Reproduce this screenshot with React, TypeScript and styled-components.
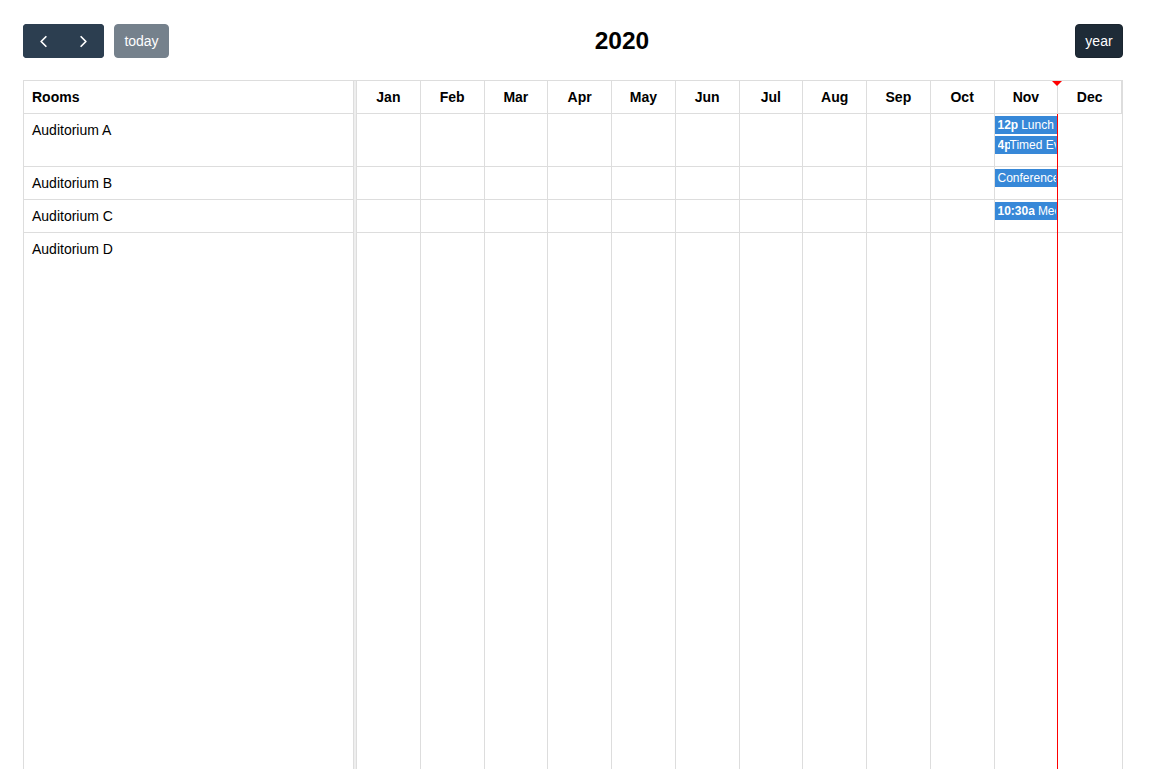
import React from "react";
import styled, { createGlobalStyle } from "styled-components";
import { ChevronLeft, ChevronRight } from "lucide-react";

const MONTHS = ["Jan", "Feb", "Mar", "Apr", "May", "Jun", "Jul", "Aug", "Sep", "Oct", "Nov", "Dec"];

interface CalEvent {
  time?: string;
  title: string;
  clipTime?: boolean;
}

interface Room {
  name: string;
  height: number;
  events: CalEvent[];
}

const ROOMS: Room[] = [
  {
    name: "Auditorium A",
    height: 53,
    events: [
      { time: "12p", title: "Lunch" },
      { time: "4p", title: "Timed Event", clipTime: true },
    ],
  },
  { name: "Auditorium B", height: 33, events: [{ title: "Conference" }] },
  { name: "Auditorium C", height: 33, events: [{ time: "10:30a", title: "Meeting" }] },
  { name: "Auditorium D", height: 620, events: [] },
];

const EVENT_MONTH = 10;
const NOW_PERCENT = 91.5;

const GlobalStyle = createGlobalStyle`
  html, body {
    margin: 0;
    padding: 0;
    overflow: hidden;
    background: #fff;
  }
  body {
    font-family: "Liberation Sans", Arial, sans-serif;
    font-size: 14px;
    color: #000;
  }
`;

function App() {
  return (
    <>
      <GlobalStyle />
      <Page>
        <Toolbar>
          <ToolbarChunk>
            <ButtonGroup>
              <NavButton aria-label="prev">
                <ChevronLeft size={19} strokeWidth={2.2} />
              </NavButton>
              <NavButton aria-label="next">
                <ChevronRight size={19} strokeWidth={2.2} />
              </NavButton>
            </ButtonGroup>
            <TodayButton disabled>today</TodayButton>
          </ToolbarChunk>
          <Title>2020</Title>
          <ToolbarChunk>
            <ViewButton>year</ViewButton>
          </ToolbarChunk>
        </Toolbar>

        <Timeline>
          <ResourcePane>
            <HeaderCell>Rooms</HeaderCell>
            {ROOMS.map((room) => (
              <ResourceCell key={room.name} $height={room.height}>
                {room.name}
              </ResourceCell>
            ))}
          </ResourcePane>

          <Divider />

          <LanePane>
            <MonthHeader>
              {MONTHS.map((m) => (
                <MonthCell key={m}>{m}</MonthCell>
              ))}
              <NowArrow style={{ left: `${NOW_PERCENT}%` }} />
            </MonthHeader>
            <LaneBody>
              {ROOMS.map((room) => (
                <Lane key={room.name} $height={room.height}>
                  {MONTHS.map((m, i) => (
                    <LaneSlot key={m}>
                      {i === EVENT_MONTH &&
                        room.events.map((ev) => (
                          <EventBar key={ev.title}>
                            {ev.time && <EventTime $clip={ev.clipTime}>{ev.time}</EventTime>}
                            <EventTitle>{ev.title}</EventTitle>
                          </EventBar>
                        ))}
                    </LaneSlot>
                  ))}
                </Lane>
              ))}
              <NowLine style={{ left: `${NOW_PERCENT}%` }} />
            </LaneBody>
          </LanePane>
        </Timeline>
      </Page>
    </>
  );
}

const Page = styled.div`
  width: 1100px;
  padding: 24px 0 0 23px;
`;

const Toolbar = styled.div`
  display: flex;
  justify-content: space-between;
  align-items: center;
  height: 34px;
  margin-bottom: 22px;
`;

const ToolbarChunk = styled.div`
  display: flex;
  align-items: center;
  gap: 10px;
`;

const ButtonGroup = styled.div`
  display: flex;
  border-radius: 4px;
  overflow: hidden;
`;

const BaseButton = styled.button`
  font-family: "Liberation Sans", Arial, sans-serif;
  font-size: 14px;
  color: #fff;
  border: 1px solid #2c3e50;
  background: #2c3e50;
  height: 34px;
  padding: 0 9px;
  border-radius: 4px;
  display: flex;
  align-items: center;
  justify-content: center;
  cursor: pointer;
`;

const NavButton = styled(BaseButton)`
  width: 40.5px;
  border-radius: 0;
  padding: 0;
`;

const TodayButton = styled(BaseButton)`
  width: 55px;
  opacity: 0.65;
  cursor: default;
`;

const ViewButton = styled(BaseButton)`
  width: 48px;
  background: #1e2b37;
  border-color: #1a252f;
`;

const Title = styled.h2`
  margin: 0;
  font-size: 24.5px;
  font-weight: 700;
`;

const Timeline = styled.div`
  display: flex;
  align-items: flex-start;
  border: 1px solid #ddd;
  border-bottom: none;
`;

const ResourcePane = styled.div`
  width: 329px;
  flex-shrink: 0;
  display: flex;
  flex-direction: column;
`;

const HeaderCell = styled.div`
  flex-shrink: 0;
  height: 33px;
  box-sizing: border-box;
  border-bottom: 1px solid #ddd;
  padding: 0 8px;
  display: flex;
  align-items: center;
  font-weight: 700;
`;

const ResourceCell = styled.div<{ $height: number }>`
  flex-shrink: 0;
  height: ${({ $height }) => $height}px;
  border-bottom: 1px solid #ddd;
  padding: 8px 8px 0;
  box-sizing: border-box;
  line-height: 16px;
`;

const Divider = styled.div`
  align-self: stretch;
  flex-shrink: 0;
  width: 2px;
  background: #eee;
  border-left: 1px solid #ddd;
  border-right: 1px solid #ddd;
`;

const LanePane = styled.div`
  flex: 1;
  min-width: 0;
  display: flex;
  flex-direction: column;
  position: relative;
`;

const MonthHeader = styled.div`
  flex-shrink: 0;
  display: grid;
  grid-template-columns: repeat(12, 1fr);
  height: 33px;
  border-bottom: 1px solid #ddd;
  box-sizing: border-box;
  position: relative;
`;

const MonthCell = styled.div`
  border-right: 1px solid #ddd;
  display: flex;
  align-items: center;
  justify-content: center;
  font-weight: 700;
  &:last-child {
    border-right: none;
  }
`;

const LaneBody = styled.div`
  position: relative;
  flex-shrink: 0;
`;

const Lane = styled.div<{ $height: number }>`
  display: grid;
  grid-template-columns: repeat(12, 1fr);
  height: ${({ $height }) => $height}px;
  border-bottom: 1px solid #ddd;
  box-sizing: border-box;
`;

const LaneSlot = styled.div`
  border-right: 1px solid #ddd;
  display: flex;
  flex-direction: column;
  gap: 2px;
  padding-top: 2px;
  min-width: 0;
  &:last-child {
    border-right: none;
  }
`;

const EventBar = styled.div`
  background: #3788d8;
  border: 1px solid #3788d8;
  color: #fff;
  height: 18px;
  box-sizing: border-box;
  font-size: 12px;
  line-height: 16px;
  padding: 0 2px;
  white-space: nowrap;
  overflow: hidden;
`;

const EventTime = styled.span<{ $clip?: boolean }>`
  font-weight: 700;
  display: inline-block;
  vertical-align: top;
  overflow: hidden;
  max-width: ${({ $clip }) => ($clip ? "12px" : "none")};
  margin-right: ${({ $clip }) => ($clip ? "0" : "3px")};
`;

const EventTitle = styled.span``;

const NowLine = styled.div`
  position: absolute;
  top: 0;
  bottom: 0;
  width: 0;
  border-left: 1px solid red;
`;

const NowArrow = styled.div`
  position: absolute;
  top: 0;
  width: 0;
  height: 0;
  margin-left: -5px;
  border-left: 5px solid transparent;
  border-right: 5px solid transparent;
  border-top: 5px solid red;
`;

export default App;
